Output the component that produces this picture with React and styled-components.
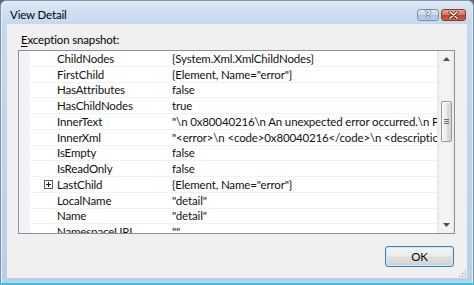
import React from 'react';
import styled, { createGlobalStyle } from 'styled-components';

const GlobalStyle = createGlobalStyle`
  html, body {
    margin: 0;
    padding: 0;
  }
  body {
    width: 474px;
    height: 285px;
    overflow: hidden;
    background: linear-gradient(#5f636a 0, #5f636a 30px, #3fc1e3 30px);
    font-family: "Segoe UI", Lato, "Open Sans", sans-serif;
    font-size: 11.5px;
    letter-spacing: -0.15px;
    color: #000;
  }
`;

const ROWS = [
    { name: 'ChildNodes', value: '{System.Xml.XmlChildNodes}' },
    { name: 'FirstChild', value: '{Element, Name="error"}' },
    { name: 'HasAttributes', value: 'false' },
    { name: 'HasChildNodes', value: 'true' },
    { name: 'InnerText', value: '"\\n 0x80040216\\n An unexpected error occurred.\\n Platform error: the remote server returned an error' },
    { name: 'InnerXml', value: '"<error>\\n <code>0x80040216</code>\\n <description>An unexpected error occurred' },
    { name: 'IsEmpty', value: 'false' },
    { name: 'IsReadOnly', value: 'false' },
    { name: 'LastChild', value: '{Element, Name="error"}', expandable: true },
    { name: 'LocalName', value: '"detail"' },
    { name: 'Name', value: '"detail"' },
    { name: 'NamespaceURI', value: '""' },
];

const ExpandIcon = () => (
    <svg width="9" height="9" viewBox="0 0 9 9">
        <rect x="0.5" y="0.5" width="8" height="8" fill="#fff" stroke="#5a5a5a" />
        <path d="M2 4.5h5M4.5 2v5" stroke="#1a1a1a" strokeWidth="1" />
    </svg>
);

const ArrowIcon = ({ down }) => (
    <svg width="7" height="4" viewBox="0 0 7 4">
        <path d={down ? 'M0 0h7L3.5 4z' : 'M0 4h7L3.5 0z'} fill="#4d4d4d" />
    </svg>
);

const CloseGlyph = () => (
    <svg width="11" height="8" viewBox="0 0 11 8">
        <path d="M2 1l7 6M9 1L2 7" stroke="#5a2018" strokeWidth="3" strokeLinecap="round" />
        <path d="M2 1l7 6M9 1L2 7" stroke="#fff" strokeWidth="1.6" strokeLinecap="round" />
    </svg>
);

const App = () => {
    return (
        <>
            <GlobalStyle />
            <Window>
                <TitleBar>
                    <Title>View Detail</Title>
                    <CaptionButtons>
                        <HelpButton>?</HelpButton>
                        <CloseButton><CloseGlyph /></CloseButton>
                    </CaptionButtons>
                </TitleBar>
                <Client>
                    <Label><u>E</u>xception snapshot:</Label>
                    <ListBox>
                        <Gutter />
                        <Rows>
                            {ROWS.map((r) => (
                                <Row key={r.name}>
                                    <ExpandCell>{r.expandable && <ExpandIcon />}</ExpandCell>
                                    <NameCell>{r.name}</NameCell>
                                    <ValueCell>{r.value}</ValueCell>
                                </Row>
                            ))}
                        </Rows>
                        <ScrollBar>
                            <ArrowButton><ArrowIcon /></ArrowButton>
                            <Track>
                                <Thumb>
                                    <Grip />
                                </Thumb>
                            </Track>
                            <ArrowButton><ArrowIcon down /></ArrowButton>
                        </ScrollBar>
                    </ListBox>
                    <Footer>
                        <OkButton>OK</OkButton>
                    </Footer>
                    <ResizeGrip />
                </Client>
            </Window>
        </>
    );
};

export default App;

const Window = styled.div`
    width: 474px;
    height: 283px;
    box-sizing: border-box;
    display: flex;
    flex-direction: column;
    border: 1px solid #7c93b0;
    border-bottom: none;
    border-radius: 6px 6px 0 0;
    padding: 0 6px 5px 6px;
    background: linear-gradient(to bottom, #dbe7f5 0, #c4d8ef 23px, #bed4ed 60%, #b8cfe9 100%);
    box-shadow: inset 1px 1px 0 #e8f0fa, inset -1px 0 0 #e3edf8;
`

const TitleBar = styled.div`
    height: 23px;
    display: flex;
    align-items: flex-start;
    justify-content: space-between;
`

const Title = styled.div`
    margin: 7px 0 0 3px;
    line-height: 14px;
    font-size: 11.5px;
    color: #000;
`

const CaptionButtons = styled.div`
    display: flex;
    gap: 2px;
    margin: 8px 1px 0 0;
`

const CaptionBase = styled.div`
    height: 12px;
    box-sizing: border-box;
    border-radius: 3px;
    display: flex;
    align-items: center;
    justify-content: center;
`

const HelpButton = styled(CaptionBase)`
    width: 22px;
    border: 1px solid #7890ad;
    background: linear-gradient(#dfe9f5 0%, #c4d5ea 50%, #abc1de 51%, #b9cde6 100%);
    color: #fff;
    font-family: "DejaVu Sans", sans-serif;
    font-weight: bold;
    font-size: 10px;
    line-height: 10px;
    text-shadow: 0 0 1px #2d3c52, 0 0 1px #2d3c52, 0 0 1px #2d3c52;
`

const CloseButton = styled(CaptionBase)`
    width: 25px;
    border: 1px solid #8a3b2f;
    background: linear-gradient(#e8a597 0%, #d27a68 45%, #c2432c 55%, #d0604a 100%);
`

const Client = styled.div`
    position: relative;
    flex: 1;
    display: flex;
    flex-direction: column;
    background: #f0f0f0;
    padding: 9px 12px 10px 11px;
`

const Label = styled.div`
    line-height: 14px;
    margin: 0 0 3px 3px;
    color: #000;
    u {
        text-decoration: underline;
        text-underline-offset: 2px;
    }
`

const ListBox = styled.div`
    height: 184px;
    box-sizing: border-box;
    border: 1px solid #8e9095;
    background: #fff;
    display: flex;
    overflow: hidden;
`

const Gutter = styled.div`
    width: 11px;
    flex: none;
    background: #f1f2f8;
`

const Rows = styled.div`
    flex: 1;
    min-width: 0;
    overflow: hidden;
`

const Row = styled.div`
    height: 15.75px;
    box-sizing: border-box;
    display: flex;
    align-items: center;
    border-bottom: 1px solid #f2f2f2;
    white-space: pre;
    color: #111;
`

const ExpandCell = styled.div`
    width: 27px;
    flex: none;
    display: flex;
    align-items: center;
    padding-left: 14px;
    box-sizing: border-box;
`

const NameCell = styled.div`
    width: 115px;
    flex: none;
    overflow: hidden;
`

const ValueCell = styled.div`
    flex: 1;
    overflow: hidden;
`

const ScrollBar = styled.div`
    width: 17px;
    flex: none;
    display: flex;
    flex-direction: column;
    background: linear-gradient(to right, #e4e4e4 0, #f3f3f3 3px, #f3f3f3 14px, #e9e9e9 17px);
`

const ArrowButton = styled.div`
    height: 16px;
    flex: none;
    display: flex;
    align-items: center;
    justify-content: center;
    padding-left: 2px;
`

const Track = styled.div`
    flex: 1;
    display: flex;
    flex-direction: column;
    align-items: center;
`

const Thumb = styled.div`
    margin-top: 34px;
    margin-left: 2px;
    width: 11px;
    height: 41px;
    box-sizing: border-box;
    border: 1px solid #979797;
    border-radius: 2px;
    background: linear-gradient(to right, #f6f6f6 0%, #ececec 50%, #dcdcdc 51%, #d4d4d4 100%);
    box-shadow: inset 1px 1px 0 #fff;
    display: flex;
    align-items: center;
    justify-content: center;
`

const Grip = styled.div`
    width: 5px;
    height: 5px;
    background: linear-gradient(#6d6d6d 0 1px, transparent 1px 2px, #6d6d6d 2px 3px, transparent 3px 4px, #6d6d6d 4px 5px);
`

const Footer = styled.div`
    display: flex;
    justify-content: flex-end;
    margin-top: 12px;
`

const OkButton = styled.div`
    width: 69px;
    height: 21px;
    margin-right: 1px;
    box-sizing: border-box;
    border: 1px solid #3c7fb1;
    border-radius: 3px;
    background: linear-gradient(#f4f4f4 0%, #ececec 48%, #dedede 52%, #d2d2d2 100%);
    box-shadow: inset 0 0 0 1px #cdebf8;
    display: flex;
    align-items: center;
    justify-content: center;
    line-height: 14px;
`

const ResizeGrip = styled.div`
    position: absolute;
    right: 1px;
    bottom: 1px;
    width: 8px;
    height: 8px;
    background:
        radial-gradient(circle, #b7b7b7 0.8px, transparent 1.2px) 0 0 / 3px 3px;
    clip-path: polygon(100% 0, 100% 100%, 0 100%);
`
